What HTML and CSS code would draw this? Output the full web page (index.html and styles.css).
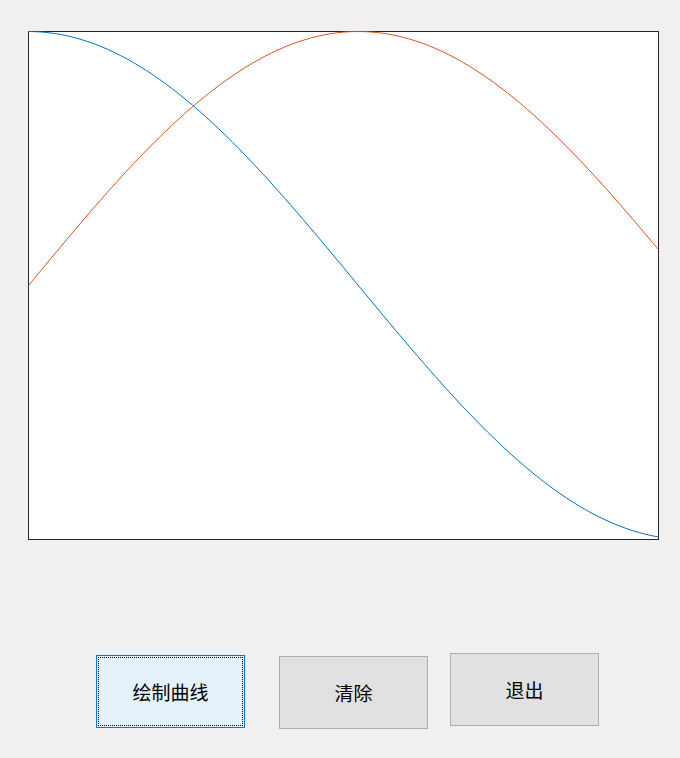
FILE: index.html
```html
<!DOCTYPE html>
<html lang="zh">
<head>
<meta charset="utf-8">
<link rel="stylesheet" href="styles.css">
<title>绘制曲线</title>
</head>
<body>
<div class="window">
  <div class="plot">
    <svg class="axes" width="631" height="509" viewBox="0 0 631 509">
      <rect x="0.5" y="0.5" width="630" height="508" fill="#ffffff" stroke="#262626" stroke-width="1"/>
      <path fill="none" stroke="#D95319" stroke-width="1" d="M0.5,254.5 C35.5,212.167 70.5,169.876 105.5,132.725 C140.5,95.574 175.5,63.64 210.5,40.767 C245.5,17.894 280.5,4.133 315.5,1.138 C350.5,-1.857 385.5,5.921 420.5,23.538 C455.5,41.155 490.5,68.574 525.5,102.489 C560.5,136.404 595.5,176.747 630.5,218.656"/>
      <path fill="none" stroke="#0072BD" stroke-width="1" d="M0.5,0.5 C35.5,0.5 70.5,11.299 105.5,31.595 C140.5,51.891 175.5,81.642 210.5,117.264 C245.5,152.886 280.5,194.305 315.5,236.532 C350.5,278.759 385.5,321.708 420.5,360.202 C455.5,398.696 490.5,432.655 525.5,457.99 C560.5,483.325 595.5,499.983 630.5,505.957"/>
    </svg>
  </div>
  <div class="buttons">
    <button class="btn btn-draw">绘制曲线</button>
    <button class="btn btn-clear">清除</button>
    <button class="btn btn-exit">退出</button>
  </div>
</div>
</body>
</html>
```
FILE: styles.css
```css
html, body {
  margin: 0;
  padding: 0;
  background: #f0f0f0;
}
body {
  width: 680px;
  height: 758px;
  overflow: hidden;
  font-family: "Noto Sans CJK SC", "Noto Sans", sans-serif;
}
.window {
  padding: 31px 0 0 28px;
}
.plot {
  width: 631px;
  height: 509px;
}
.axes {
  display: block;
}
.buttons {
  display: flex;
  align-items: flex-start;
  margin-top: 113px;
  padding-left: 68px;
}
.btn {
  box-sizing: border-box;
  width: 149px;
  height: 73px;
  margin: 0;
  padding: 0;
  border: 1px solid #adadad;
  background: #e1e1e1;
  color: #000;
  font-family: "Noto Sans CJK SC", "Noto Sans", sans-serif;
  font-size: 19px;
  line-height: 1;
  display: flex;
  align-items: center;
  justify-content: center;
}
.btn-draw {
  margin-top: 2px;
  border-color: #0078d7;
  background: #e5f1fb;
  outline: 1px dotted #000;
  outline-offset: -3px;
}
.btn-clear {
  margin-top: 3px;
  margin-left: 34px;
}
.btn-exit {
  margin-left: 22px;
}
```
